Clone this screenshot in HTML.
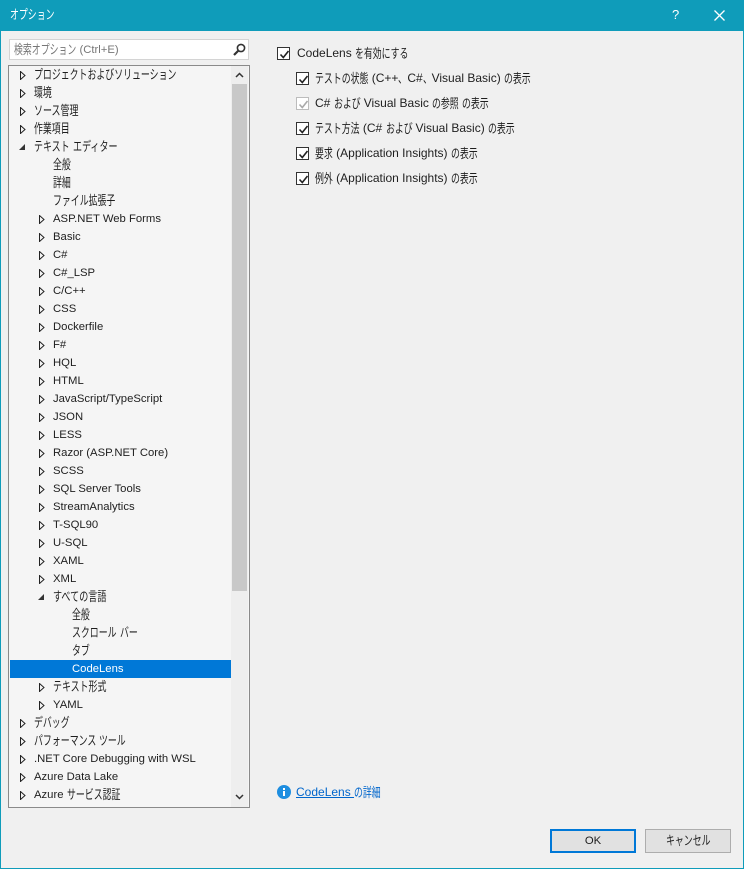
<!DOCTYPE html>
<html><head><meta charset="utf-8"><style>
*{margin:0;padding:0;box-sizing:border-box}
body{width:744px;height:869px;background:#f0f0f0;font-family:"Liberation Sans","Noto Sans CJK JP",sans-serif;font-size:11.3px;color:#1e1e1e;position:relative;overflow:hidden}
.j{font-size:13px;display:inline-block;transform-origin:0 50%;line-height:1;position:relative;top:1px}
.win{position:absolute;left:0;top:0;width:744px;height:869px;border:1px solid #0f9cba;border-top:none}
.title{position:absolute;left:0;top:0;width:744px;height:31px;background:#0f9cba;color:#fff;font-size:12px}
.title .t{position:absolute;left:10px;top:7px}
.title .q{position:absolute;left:672px;top:7px;font-size:13px}
.search{position:absolute;left:9px;top:39px;width:240px;height:21px;background:#fff;border:1px solid #d4d4d4;color:#777;padding:2px 4px;line-height:15px}
.tree{position:absolute;left:8px;top:65px;width:242px;height:743px;background:#f5f5f5;border:1px solid #8a8a8a;overflow:hidden}
.row{position:absolute;height:18px;line-height:18px;white-space:nowrap;left:0;width:222px}
.sel{background:#0078d7;color:#fff}
.arr{position:absolute;top:5px}
.sb{position:absolute;left:222px;top:0;width:17px;height:741px;background:#eee}
.thumb{position:absolute;left:1px;top:18px;width:15px;height:507px;background:#c8c8c8}
.cb{position:absolute;width:13px;height:13px;border:1px solid #333;background:#fff}
.cb svg{position:absolute;left:1px;top:1px}
.lbl{position:absolute;white-space:nowrap;line-height:15px;font-size:12px}
.btn{position:absolute;top:829px;width:86px;height:24px;background:#e1e1e1;border:1px solid #adadad;text-align:center;line-height:22px}
</style></head><body>
<div class="win"></div>
<div class="title"><span class="t">オプション</span><span class="q">?</span>
<svg style="position:absolute;left:714px;top:10px" width="11" height="11"><path d="M0.5 0.5L10.5 10.5M10.5 0.5L0.5 10.5" stroke="#fff" stroke-width="1.3"/></svg></div>
<div class="search tx">検索オプション (Ctrl+E)
<svg style="position:absolute;left:223px;top:3px" width="13" height="13"><circle cx="8" cy="5" r="3.6" fill="none" stroke="#333" stroke-width="1.6"/><path d="M5.5 7.5L1 12" stroke="#333" stroke-width="2.2"/></svg></div>
<div class="tree" id="tree">
<div class="sb"><div class="thumb"></div>
<svg style="position:absolute;left:4px;top:6px" width="9" height="6"><path d="M1 5L4.5 1.5L8 5" fill="none" stroke="#333" stroke-width="1.5"/></svg>
<svg style="position:absolute;left:4px;top:728px" width="9" height="6"><path d="M1 1L4.5 4.5L8 1" fill="none" stroke="#333" stroke-width="1.5"/></svg>
</div>
</div>
<div class="cb" style="left:277px;top:47px"><svg width="11" height="11"><path d="M1.5 5.5L4.3 8.5L9.5 2" fill="none" stroke="#222" stroke-width="1.6"/></svg></div>
<div class="lbl tx" style="left:297px;top:46px">CodeLens を有効にする</div>
<div class="cb" style="left:296px;top:72px"><svg width="11" height="11"><path d="M1.5 5.5L4.3 8.5L9.5 2" fill="none" stroke="#222" stroke-width="1.6"/></svg></div>
<div class="lbl tx" style="left:315px;top:71px">テストの状態 (C++、C#、Visual Basic) の表示</div>
<div class="cb" style="left:296px;top:97px;border-color:#bcbcbc;background:#fff"><svg width="11" height="11"><path d="M1.5 5.5L4.3 8.5L9.5 2" fill="none" stroke="#aaa" stroke-width="1.6"/></svg></div>
<div class="lbl tx" style="left:315px;top:96px">C# および Visual Basic の参照 の表示</div>
<div class="cb" style="left:296px;top:122px"><svg width="11" height="11"><path d="M1.5 5.5L4.3 8.5L9.5 2" fill="none" stroke="#222" stroke-width="1.6"/></svg></div>
<div class="lbl tx" style="left:315px;top:121px">テスト方法 (C# および Visual Basic) の表示</div>
<div class="cb" style="left:296px;top:147px"><svg width="11" height="11"><path d="M1.5 5.5L4.3 8.5L9.5 2" fill="none" stroke="#222" stroke-width="1.6"/></svg></div>
<div class="lbl tx" style="left:315px;top:146px">要求 (Application Insights) の表示</div>
<div class="cb" style="left:296px;top:172px"><svg width="11" height="11"><path d="M1.5 5.5L4.3 8.5L9.5 2" fill="none" stroke="#222" stroke-width="1.6"/></svg></div>
<div class="lbl tx" style="left:315px;top:171px">例外 (Application Insights) の表示</div>
<svg style="position:absolute;left:277px;top:785px" width="14" height="14"><circle cx="7" cy="7" r="7" fill="#1e8ee0"/><rect x="6" y="6" width="2" height="5" fill="#fff"/><rect x="6" y="3" width="2" height="2" fill="#fff"/></svg>
<div class="lbl tx" style="left:296px;top:785px;color:#0066cc;text-decoration:underline">CodeLens の詳細</div>
<div class="btn" style="left:550px;border:2px solid #0078d7;line-height:20px">OK</div>
<div class="btn tx" style="left:645px">キャンセル</div>
<script>
var rows=[[0,'c','プロジェクトおよびソリューション'],[0,'c','環境'],[0,'c','ソース管理'],[0,'c','作業項目'],[0,'e','テキスト エディター'],[1,'n','全般'],[1,'n','詳細'],[1,'n','ファイル拡張子']];
['ASP.NET Web Forms','Basic','C#','C#_LSP','C/C++','CSS','Dockerfile','F#','HQL','HTML','JavaScript/TypeScript','JSON','LESS','Razor (ASP.NET Core)','SCSS','SQL Server Tools','StreamAnalytics','T-SQL90','U-SQL','XAML','XML'].forEach(function(s){rows.push([1,'c',s])});
rows.push([1,'e','すべての言語'],[2,'n','全般'],[2,'n','スクロール バー'],[2,'n','タブ'],[2,'n','CodeLens'],[1,'c','テキスト形式'],[1,'c','YAML'],[0,'c','デバッグ'],[0,'c','パフォーマンス ツール'],[0,'c','.NET Core Debugging with WSL'],[0,'c','Azure Data Lake'],[0,'c','Azure サービス認証']);
var t=document.getElementById('tree'),h='';
rows.forEach(function(r,i){var lv=r[0],top=i*18,tx=[24,43,62][lv],ax=[10,29,29][lv];
var sel=r[2]=='CodeLens';
var a='';
if(r[1]=='c')a='<svg class="arr" style="left:'+ax+'px" width="6" height="9"><path d="M0.5 0.5L5 4.5L0.5 8.5Z" fill="none" stroke="#222"/></svg>';
if(r[1]=='e')a='<svg class="arr" style="left:'+(ax-1)+'px;top:6px" width="7" height="7"><path d="M6 0L6 6L0 6Z" fill="#333"/></svg>';
h+='<div class="row'+(sel?' sel':'')+'" style="top:'+top+'px;left:1px">'+a+'<span class="tx" style="position:absolute;left:'+tx+'px">'+r[2]+'</span></div>';});
t.insertAdjacentHTML('afterbegin',h);
var R=/([\u3000-\u9fff\uff00-\uffef]+)/g;
function wrap(n){Array.prototype.slice.call(n.childNodes).forEach(function(c){if(c.nodeType==3&&/[\u3000-\u9fff\uff00-\uffef]/.test(c.nodeValue)){var s=document.createElement('span');s.innerHTML=c.nodeValue.replace(R,'<span class="j">$1</span>');n.replaceChild(s,c);}});}
document.querySelectorAll('.tx,.title .t').forEach(wrap);
document.querySelectorAll('.j').forEach(function(e){var w=e.getBoundingClientRect().width;var target=e.textContent.length*8.9;if(w>0){e.style.transform='scaleX('+(target/w)+')';e.style.marginRight=(target-w)+'px';}});
</script>
</body></html>
